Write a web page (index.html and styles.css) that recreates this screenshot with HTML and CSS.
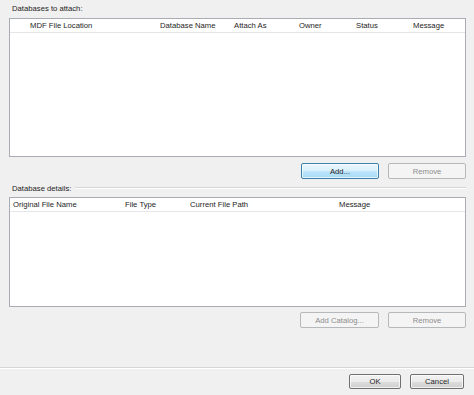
FILE: index.html
```html
<!DOCTYPE html>
<html lang="en">
<head>
    <meta charset="UTF-8">
    <title>Attach Databases</title>
    <link rel="stylesheet" href="styles.css">
</head>
<body>

    <div class="dialog">
        <!-- Databases to attach -->
        <div class="section-label">Databases to attach:</div>
        <div class="listview list-top">
            <div class="lv-header">
                <span class="col" style="width: 147px; padding-left: 20px;">MDF File Location</span>
                <span class="col" style="width: 74px;">Database Name</span>
                <span class="col" style="width: 65px;">Attach As</span>
                <span class="col" style="width: 57px;">Owner</span>
                <span class="col" style="width: 57px;">Status</span>
                <span class="col">Message</span>
            </div>
        </div>
        <div class="button-row">
            <button class="btn btn-default">Add...</button>
            <button class="btn" disabled>Remove</button>
        </div>

        <!-- Database details -->
        <div class="group-title">
            <span>Database details:</span>
            <span class="group-line"></span>
        </div>
        <div class="listview list-bottom">
            <div class="lv-header">
                <span class="col" style="width: 112px;">Original File Name</span>
                <span class="col" style="width: 65px;">File Type</span>
                <span class="col" style="width: 149px;">Current File Path</span>
                <span class="col">Message</span>
            </div>
        </div>
        <div class="button-row">
            <button class="btn btn-wide" disabled>Add Catalog...</button>
            <button class="btn" disabled>Remove</button>
        </div>
    </div>

    <div class="footer">
        <button class="btn btn-ok">OK</button>
        <button class="btn btn-cancel">Cancel</button>
    </div>

</body>
</html>
```

FILE: styles.css
```css
body {
    margin: 0;
    padding: 0;
    width: 474px;
    height: 395px;
    background-color: #f0f0f0;
    font-family: "Liberation Sans", Arial, sans-serif;
    font-size: 7.7px;
    color: #1e1e1e;
    display: flex;
    flex-direction: column;
    overflow: hidden;
}

.dialog {
    padding: 0 8px 0 9px;
    height: 367px;
    display: flex;
    flex-direction: column;
}

.section-label {
    height: 13px;
    line-height: 10px;
    padding: 4px 0 0 3px;
    box-sizing: border-box;
    margin-bottom: 5px;
}

.listview {
    background-color: #ffffff;
    border: 1px solid #a9acb2;
    box-sizing: border-box;
}

.list-top {
    height: 139px;
}

.list-bottom {
    height: 110px;
}

.lv-header {
    height: 14px;
    line-height: 13px;
    border-bottom: 1px solid #e4e6ea;
    box-sizing: border-box;
    display: flex;
    white-space: nowrap;
}

.col {
    display: block;
    padding-left: 3px;
    box-sizing: border-box;
}

.button-row {
    display: flex;
    justify-content: flex-end;
    gap: 9px;
    margin-top: 6px;
    height: 16px;
}

.list-bottom + .button-row {
    margin-top: 5px;
}

.btn {
    width: 78px;
    height: 16px;
    padding: 0;
    font-family: inherit;
    font-size: 7.7px;
    color: #1e1e1e;
    border: 1px solid #707070;
    border-radius: 2px;
    background: linear-gradient(#f2f2f2 0%, #ebebeb 50%, #dddddd 51%, #cfcfcf 100%);
    box-shadow: inset 0 0 0 1px rgba(255, 255, 255, 0.7);
}

.btn-default {
    border-color: #3c7fb1;
    background: linear-gradient(#eaf6fd 0%, #d9f0fc 50%, #bee6fd 51%, #a7d9f5 100%);
}

.btn:disabled {
    color: #8d8d8d;
    border-color: #b5b9bc;
    background: #f4f4f4;
    box-shadow: none;
}

.btn-wide {
    width: 79px;
}

.group-title {
    display: flex;
    align-items: center;
    gap: 4px;
    height: 10px;
    margin-top: 4px;
    padding-left: 3px;
    margin-bottom: 4px;
}

.group-line {
    flex: 1;
    height: 0;
    border-top: 1px solid #d5d5d5;
    border-bottom: 1px solid #ffffff;
}

.footer {
    border-top: 1px solid #d5d5d5;
    box-shadow: inset 0 1px 0 #ffffff;
    display: flex;
    justify-content: flex-end;
    gap: 9px;
    padding: 6px 10px 0 0;
    flex: 1;
}

.btn-ok {
    width: 52px;
    height: 15px;
}

.btn-cancel {
    width: 54px;
    height: 15px;
}
```
